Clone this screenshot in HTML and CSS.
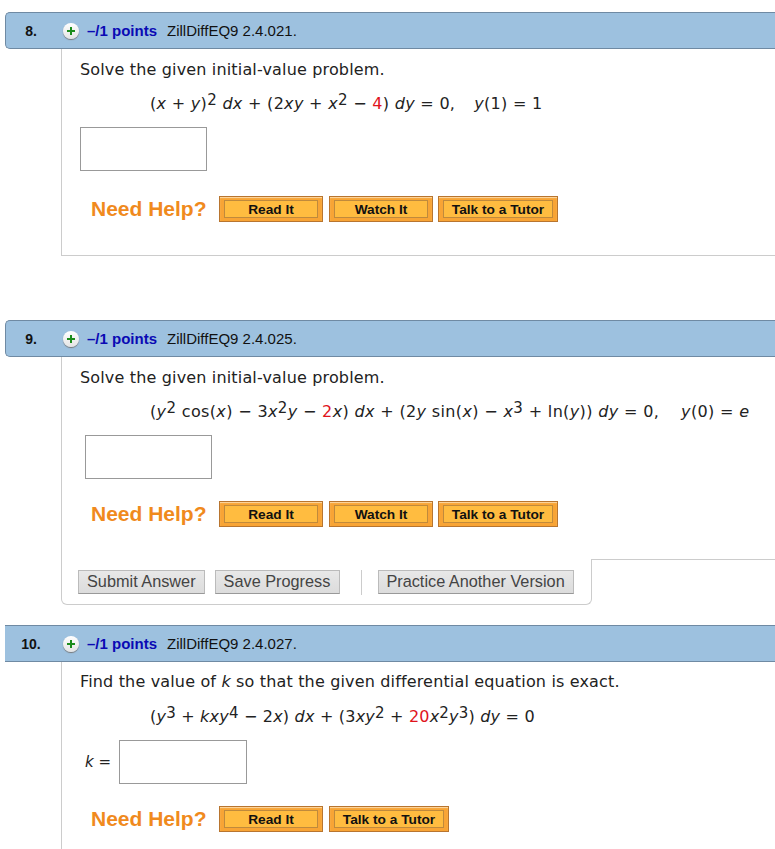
FILE: index.html
```html
<!DOCTYPE html>
<html lang="en">
<head>
  <meta charset="UTF-8">
  <meta name="viewport" content="width=device-width, initial-scale=1.0">
  <title>Assignment Questions</title>
  <link rel="stylesheet" href="styles.css">
</head>
<body>
  <div class="question q-eight">
    <div class="q-header">
      <span class="q-number">8.</span>
      <span class="expand"><svg viewBox="0 0 8 8" width="8" height="8"><path d="M3 0h2v3h3v2H5v3H3V5H0V3h3z" fill="#1c8c1c"/></svg></span>
      <span class="q-points">&ndash;/1 points</span>
      <span class="q-code">ZillDiffEQ9 2.4.021.</span>
    </div>
    <div class="q-body">
      <p class="prompt">Solve the given initial-value problem.</p>
      <p class="equation">(<i>x</i> + <i>y</i>)<sup>2</sup> <i>dx</i> + (2<i>xy</i> + <i>x</i><sup>2</sup> &minus; <span class="wrong">4</span>) <i>dy</i> = 0,<span class="condition"><i>y</i>(1) = 1</span></p>
      <div class="answer"><input type="text" class="answer-box"></div>
      <div class="help">
        <span class="help-label">Need Help?</span>
        <span class="help-btn"><span class="help-btn-inner">Read It</span></span>
        <span class="help-btn btn-watch"><span class="help-btn-inner">Watch It</span></span>
        <span class="help-btn btn-tutor"><span class="help-btn-inner">Talk to a Tutor</span></span>
      </div>
    </div>
  </div>

  <div class="question q-nine">
    <div class="q-header">
      <span class="q-number">9.</span>
      <span class="expand"><svg viewBox="0 0 8 8" width="8" height="8"><path d="M3 0h2v3h3v2H5v3H3V5H0V3h3z" fill="#1c8c1c"/></svg></span>
      <span class="q-points">&ndash;/1 points</span>
      <span class="q-code">ZillDiffEQ9 2.4.025.</span>
    </div>
    <div class="q-body">
      <p class="prompt">Solve the given initial-value problem.</p>
      <p class="equation">(<i>y</i><sup>2</sup> cos(<i>x</i>) &minus; 3<i>x</i><sup>2</sup><i>y</i> &minus; <span class="wrong">2</span><i>x</i>) <i>dx</i> + (2<i>y</i> sin(<i>x</i>) &minus; <i>x</i><sup>3</sup> + ln(<i>y</i>)) <i>dy</i> = 0,<span class="condition"><i>y</i>(0) = <i>e</i></span></p>
      <div class="answer answer-inset"><input type="text" class="answer-box"></div>
      <div class="help">
        <span class="help-label">Need Help?</span>
        <span class="help-btn"><span class="help-btn-inner">Read It</span></span>
        <span class="help-btn btn-watch"><span class="help-btn-inner">Watch It</span></span>
        <span class="help-btn btn-tutor"><span class="help-btn-inner">Talk to a Tutor</span></span>
      </div>
    </div>
    <div class="q-footer">
      <div class="q-actions">
        <button class="action">Submit Answer</button>
        <button class="action action-save">Save Progress</button>
        <span class="divider"></span>
        <button class="action action-practice">Practice Another Version</button>
      </div>
      <div class="q-footer-fill"></div>
    </div>
  </div>

  <div class="question q-ten">
    <div class="q-header">
      <span class="q-number">10.</span>
      <span class="expand"><svg viewBox="0 0 8 8" width="8" height="8"><path d="M3 0h2v3h3v2H5v3H3V5H0V3h3z" fill="#1c8c1c"/></svg></span>
      <span class="q-points">&ndash;/1 points</span>
      <span class="q-code">ZillDiffEQ9 2.4.027.</span>
    </div>
    <div class="q-body">
      <p class="prompt">Find the value of <i>k</i> so that the given differential equation is exact.</p>
      <p class="equation">(<i>y</i><sup>3</sup> + <i>kxy</i><sup>4</sup> &minus; 2<i>x</i>) <i>dx</i> + (3<i>xy</i><sup>2</sup> + <span class="wrong">20</span><i>x</i><sup>2</sup><i>y</i><sup>3</sup>) <i>dy</i> = 0</p>
      <div class="answer answer-inset answer-row"><label class="answer-label"><i>k</i> =</label><input type="text" class="answer-box"></div>
      <div class="help">
        <span class="help-label">Need Help?</span>
        <span class="help-btn"><span class="help-btn-inner">Read It</span></span>
        <span class="help-btn btn-tutor"><span class="help-btn-inner">Talk to a Tutor</span></span>
      </div>
    </div>
  </div>
</body>
</html>
```

FILE: styles.css
```css
* {
  margin: 0;
  padding: 0;
  box-sizing: border-box;
}

html, body {
  height: 849px;
  overflow: hidden;
}

body {
  background-color: white;
  font-family: "DejaVu Sans", Verdana, sans-serif;
  color: #222;
  padding-top: 12px;
}

.question {
  margin-left: 5px;
}

.q-nine {
  margin-top: 64px;
}

.q-ten {
  margin-top: 20px;
}

.q-header {
  display: flex;
  align-items: center;
  height: 37px;
  background-color: #9dc1df;
  border: 1px solid #6f8aa3;
  border-right: none;
  border-radius: 5px 0 0 5px;
  font-family: "Liberation Sans", Arial, sans-serif;
  font-size: 15px;
}

.q-number {
  width: 50px;
  text-align: center;
  font-size: 14px;
  font-weight: bold;
  color: #111;
}

.q-ten .q-header {
  border-left: none;
  border-radius: 0;
}

.q-ten .q-number {
  margin-left: 1px;
}

.expand {
  display: flex;
  align-items: center;
  justify-content: center;
  width: 16px;
  height: 16px;
  margin-left: 7px;
  border-radius: 50%;
  background: linear-gradient(#fff, #e4e4e4);
  box-shadow: 0 1px 1px #777;
}

.q-points {
  margin-left: 8px;
  font-weight: bold;
  color: #0a0ab4;
}

.q-code {
  margin-left: 10px;
  color: #111;
}

.q-body {
  margin-left: 56px;
  border-left: 1px solid #ccc;
  padding-left: 18px;
}

.q-eight .q-body {
  height: 207px;
  border-bottom: 1px solid #ccc;
}

.q-nine .q-body {
  height: 202px;
}

.q-ten .q-body {
  height: 187px;
}

.prompt {
  font-size: 16px;
  line-height: 20px;
  letter-spacing: 0.16px;
  padding-top: 11px;
}

.q-ten .prompt {
  padding-top: 10px;
  padding-bottom: 1px;
}

.equation {
  font-size: 16px;
  line-height: 24px;
  letter-spacing: 0.3px;
  margin-top: 12px;
  padding-left: 70px;
  white-space: nowrap;
}

.q-nine .equation {
  letter-spacing: 0.35px;
}

.q-ten .equation {
  letter-spacing: 0.2px;
}

.equation sup {
  font-size: 15px;
  line-height: 0;
  vertical-align: 4px;
}

.condition {
  margin-left: 19px;
}

.q-nine .condition {
  margin-left: 22px;
}

.wrong {
  color: #e0141c;
}

.answer {
  margin-top: 11px;
}

.answer-inset {
  padding-left: 5px;
}

.answer-row {
  display: flex;
  align-items: center;
}

.answer-row .answer-box {
  width: 128px;
}

.answer-label {
  font-size: 15px;
  margin-right: 8px;
}

.answer-box {
  display: block;
  width: 127px;
  height: 44px;
  border: 1px solid #999;
  background-color: white;
}

.help {
  display: flex;
  align-items: center;
  margin-top: 25px;
  padding-left: 11px;
}

.q-nine .help,
.q-ten .help {
  margin-top: 22px;
}

.help-label {
  width: 128px;
  font-family: "Liberation Sans", Arial, sans-serif;
  font-size: 21px;
  font-weight: bold;
  color: #f08a1d;
}

.help-btn {
  display: block;
  width: 104px;
  height: 26px;
  margin-right: 6px;
  padding: 3px 4px;
  background-color: #f8a435;
  border: 1px solid #b8752f;
  box-shadow: inset 0 1px 1px #fcd9a5;
}

.btn-watch {
  margin-right: 5px;
}

.help-btn-inner {
  display: block;
  height: 100%;
  background-color: #ffbc40;
  border: 1px solid #c08a3c;
  font-family: "Liberation Sans", Arial, sans-serif;
  font-size: 13.7px;
  font-weight: bold;
  line-height: 17px;
  text-align: center;
  color: #111;
}

.btn-tutor {
  width: 120px;
}

.q-footer {
  display: flex;
  margin-left: 56px;
}

.q-actions {
  display: flex;
  align-items: flex-start;
  width: 531px;
  height: 46px;
  padding: 11px 0 0 16px;
  border: 1px solid #ccc;
  border-top: none;
  border-radius: 0 0 6px 6px;
}

.q-footer-fill {
  flex: 1;
  border-top: 1px solid #ccc;
}

.action {
  height: 24px;
  padding: 0 8px 1px;
  margin-right: 10px;
  background: linear-gradient(#e8e8e8, #dcdcdc);
  border: 1px solid #bbb;
  border-bottom-color: #999;
  font-family: "Liberation Sans", Arial, sans-serif;
  font-size: 16.3px;
  color: #444;
}

.action-save {
  padding-right: 9px;
}

.action-practice {
  padding-left: 7px;
}

.divider {
  width: 1px;
  height: 25px;
  margin: 0 16px 0 11px;
  background-color: #ccc;
}
```
